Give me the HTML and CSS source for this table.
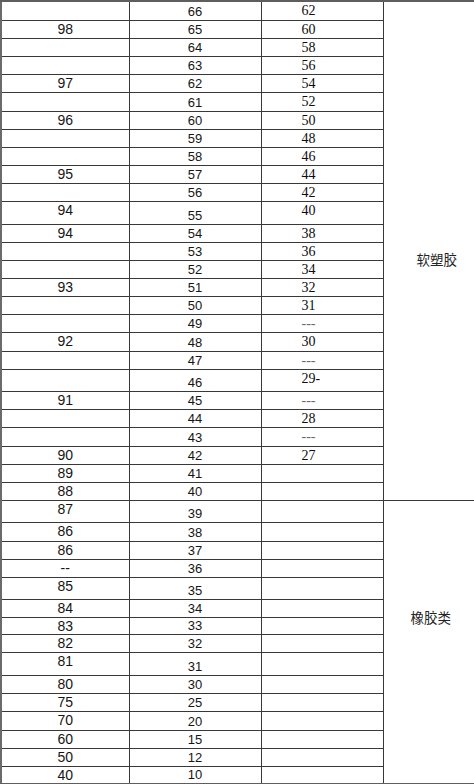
FILE: index.html
```html
<!DOCTYPE html>
<html lang="zh">
<head>
<meta charset="utf-8">
<title>硬度对照表</title>
<link rel="stylesheet" href="styles.css">
</head>
<body>
<table class="grid">
<colgroup><col class="c1"><col class="c2"><col class="c3"><col class="c4"></colgroup>
<tbody>
<tr class="h19"><td class="a"></td><td class="b">66</td><td class="c">62</td><td class="d soft" rowspan="27">软塑胶</td></tr>
<tr class="h18"><td class="a">98</td><td class="b">65</td><td class="c">60</td></tr>
<tr class="h18"><td class="a"></td><td class="b">64</td><td class="c">58</td></tr>
<tr class="h18"><td class="a"></td><td class="b">63</td><td class="c">56</td></tr>
<tr class="h18"><td class="a">97</td><td class="b">62</td><td class="c">54</td></tr>
<tr class="h19"><td class="a"></td><td class="b">61</td><td class="c">52</td></tr>
<tr class="h18"><td class="a">96</td><td class="b">60</td><td class="c">50</td></tr>
<tr class="h18"><td class="a"></td><td class="b">59</td><td class="c">48</td></tr>
<tr class="h18"><td class="a"></td><td class="b">58</td><td class="c">46</td></tr>
<tr class="h18"><td class="a">95</td><td class="b">57</td><td class="c">44</td></tr>
<tr class="h18"><td class="a"></td><td class="b">56</td><td class="c">42</td></tr>
<tr class="h23"><td class="a">94</td><td class="b">55</td><td class="c">40</td></tr>
<tr class="h18"><td class="a">94</td><td class="b">54</td><td class="c">38</td></tr>
<tr class="h18"><td class="a"></td><td class="b">53</td><td class="c">36</td></tr>
<tr class="h18"><td class="a"></td><td class="b">52</td><td class="c">34</td></tr>
<tr class="h18"><td class="a">93</td><td class="b">51</td><td class="c">32</td></tr>
<tr class="h18"><td class="a"></td><td class="b">50</td><td class="c">31</td></tr>
<tr class="h18"><td class="a"></td><td class="b">49</td><td class="c dash">---</td></tr>
<tr class="h19"><td class="a">92</td><td class="b">48</td><td class="c">30</td></tr>
<tr class="h18"><td class="a"></td><td class="b">47</td><td class="c dash">---</td></tr>
<tr class="h22"><td class="a"></td><td class="b">46</td><td class="c">29-</td></tr>
<tr class="h18"><td class="a">91</td><td class="b">45</td><td class="c dash">---</td></tr>
<tr class="h18"><td class="a"></td><td class="b">44</td><td class="c">28</td></tr>
<tr class="h19"><td class="a"></td><td class="b">43</td><td class="c dash">---</td></tr>
<tr class="h18"><td class="a">90</td><td class="b">42</td><td class="c">27</td></tr>
<tr class="h18"><td class="a">89</td><td class="b">41</td><td class="c"></td></tr>
<tr class="h18"><td class="a">88</td><td class="b">40</td><td class="c"></td></tr>
<tr class="h22"><td class="a">87</td><td class="b">39</td><td class="c"></td><td class="d rubber" rowspan="15">橡胶类</td></tr>
<tr class="h19"><td class="a">86</td><td class="b">38</td><td class="c"></td></tr>
<tr class="h18"><td class="a">86</td><td class="b">37</td><td class="c"></td></tr>
<tr class="h18"><td class="a">--</td><td class="b">36</td><td class="c"></td></tr>
<tr class="h22"><td class="a">85</td><td class="b">35</td><td class="c"></td></tr>
<tr class="h18"><td class="a">84</td><td class="b">34</td><td class="c"></td></tr>
<tr class="h17"><td class="a">83</td><td class="b">33</td><td class="c"></td></tr>
<tr class="h18"><td class="a">82</td><td class="b">32</td><td class="c"></td></tr>
<tr class="h23"><td class="a">81</td><td class="b">31</td><td class="c"></td></tr>
<tr class="h18"><td class="a">80</td><td class="b">30</td><td class="c"></td></tr>
<tr class="h18"><td class="a">75</td><td class="b">25</td><td class="c"></td></tr>
<tr class="h19"><td class="a">70</td><td class="b">20</td><td class="c"></td></tr>
<tr class="h18"><td class="a">60</td><td class="b">15</td><td class="c"></td></tr>
<tr class="h18"><td class="a">50</td><td class="b">12</td><td class="c"></td></tr>
<tr class="h17"><td class="a">40</td><td class="b">10</td><td class="c"></td></tr>
</tbody>
</table>
</body>
</html>
```
FILE: styles.css
```css
html, body {
  margin: 0;
  padding: 0;
  background: #ffffff;
}

.grid {
  border-collapse: collapse;
  table-layout: fixed;
  width: 474px;
  border-top: 2px solid #5e5e5e;
  border-left: 2px solid #6a6a6a;
  border-right: 2px solid #555555;
  border-bottom: 2px solid #5e5e5e;
  color: #151515;
}

.c1 { width: 128px; }
.c2 { width: 132px; }
.c3 { width: 122px; }
.c4 { width: 92px; }

.grid td {
  border: 1px solid #383838;
  padding: 0;
  line-height: 15px;
  overflow: visible;
  white-space: nowrap;
}

.h17 { height: 17px; }
.h18 { height: 18px; }
.h19 { height: 19px; }
.h22 { height: 22px; }
.h23 { height: 23px; }

.a {
  font-family: "Liberation Sans", Arial, sans-serif;
  font-size: 14px;
  text-align: center;
  vertical-align: top;
  padding-top: 1px !important;
}

.b {
  font-family: "Liberation Sans", Arial, sans-serif;
  font-size: 13px;
  text-align: center;
  vertical-align: bottom;
  padding-bottom: 1px !important;
}

.c {
  font-family: "Liberation Serif", "Times New Roman", serif;
  font-size: 14px;
  color: #0c0c0c;
  text-align: left;
  vertical-align: top;
  padding-top: 1px !important;
  padding-left: 40px !important;
}

.dash {
  color: #6a6a6a;
}

.d {
  font-family: "Noto Sans CJK SC", sans-serif;
  font-size: 13.5px;
  color: #222222;
  text-align: center;
}

.soft {
  vertical-align: middle;
  padding-left: 16px !important;
  padding-top: 17px !important;
}

.rubber {
  vertical-align: middle;
  padding-left: 4px !important;
  padding-bottom: 48px !important;
}
```
